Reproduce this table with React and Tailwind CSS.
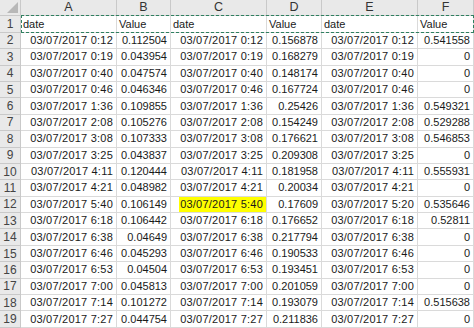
const cols = ["A", "B", "C", "D", "E", "F"];
const widths = ["w-[96px]", "w-[54px]", "w-[96px]", "w-[55px]", "w-[96px]", "w-[56px]"];

const rows = [
  ["0:12", "0.112504", "0:12", "0.156878", "0:12", "0.541558"],
  ["0:19", "0.043954", "0:19", "0.168279", "0:19", "0"],
  ["0:40", "0.047574", "0:40", "0.148174", "0:40", "0"],
  ["0:46", "0.046346", "0:46", "0.167724", "0:46", "0"],
  ["1:36", "0.109855", "1:36", "0.25426", "1:36", "0.549321"],
  ["2:08", "0.105276", "2:08", "0.154249", "2:08", "0.529288"],
  ["3:08", "0.107333", "3:08", "0.176621", "3:08", "0.546853"],
  ["3:25", "0.043837", "3:25", "0.209308", "3:25", "0"],
  ["4:11", "0.120444", "4:11", "0.181958", "4:11", "0.555931"],
  ["4:21", "0.048982", "4:21", "0.20034", "4:21", "0"],
  ["5:40", "0.106149", "5:40", "0.17609", "5:20", "0.535646"],
  ["6:18", "0.106442", "6:18", "0.176652", "6:18", "0.52811"],
  ["6:38", "0.04649", "6:38", "0.217794", "6:38", "0"],
  ["6:46", "0.045293", "6:46", "0.190533", "6:46", "0"],
  ["6:53", "0.04504", "6:53", "0.193451", "6:53", "0"],
  ["7:00", "0.045813", "7:00", "0.201059", "7:00", "0"],
  ["7:14", "0.101272", "7:14", "0.193079", "7:14", "0.515638"],
  ["7:27", "0.044754", "7:27", "0.211836", "7:27", "0"],
];

function RowNum({ n }) {
  return (
    <div className="w-[21px] shrink-0 h-full flex items-center justify-center bg-[#e9e9e9] border-r border-b border-[#c9c9c9] text-[12px] text-[#444]">
      {n}
    </div>
  );
}

function Cell({ i, children, left, yellow }) {
  const isDate = i % 2 === 0;
  return (
    <div
      className={`${widths[i]} shrink-0 h-full flex items-center border-r border-b border-[#dadada] ${
        left ? "justify-start pl-[2px]" : "justify-end pr-[3px]"
      } ${isDate && !left ? "tracking-[0.22px]" : ""}`}
    >
      {yellow ? (
        <span className="h-full w-[87px] flex items-center justify-end bg-[#ffff00] -mr-[3px] pr-[3px]">
          {children}
        </span>
      ) : (
        children
      )}
    </div>
  );
}

export default function App() {
  return (
    <div className="w-[474px] h-[328px] overflow-hidden bg-white text-[11px] text-[#1a1a1a] font-['Liberation_Sans',Arial,sans-serif] leading-none">
      {/* column headers */}
      <div className="flex h-[16.4px]">
        <div className="w-[21px] shrink-0 h-full bg-[#e9e9e9] border-r border-b border-[#c9c9c9] flex items-end justify-end p-[2px]">
          <svg width="11" height="11" viewBox="0 0 11 11">
            <polygon points="11,0 11,11 0,11" fill="#b8b8b8" />
          </svg>
        </div>
        {cols.map((c, i) => (
          <div
            key={c}
            className={`${widths[i]} shrink-0 h-full flex items-center justify-center bg-[#e9e9e9] border-r border-b border-[#c9c9c9] text-[12.5px] text-[#333]`}
          >
            {c}
          </div>
        ))}
      </div>

      {/* row 1 with copy marquee */}
      <div className="relative flex h-[16.4px]">
        <RowNum n={1} />
        {["date", "Value", "date", "Value", "date", "Value"].map((t, i) => (
          <Cell key={i} i={i} left>
            {t}
          </Cell>
        ))}
        <div className="absolute left-[21px] -top-px right-0 bottom-0 border border-dashed border-[#2f8060]" />
      </div>

      {rows.map((r, ri) => (
        <div key={ri} className="flex h-[16.4px]">
          <RowNum n={ri + 2} />
          {r.map((v, i) => (
            <Cell key={i} i={i} yellow={ri === 10 && i === 2}>
              {i % 2 === 0 ? `03/07/2017 ${v}` : v}
            </Cell>
          ))}
        </div>
      ))}
    </div>
  );
}
